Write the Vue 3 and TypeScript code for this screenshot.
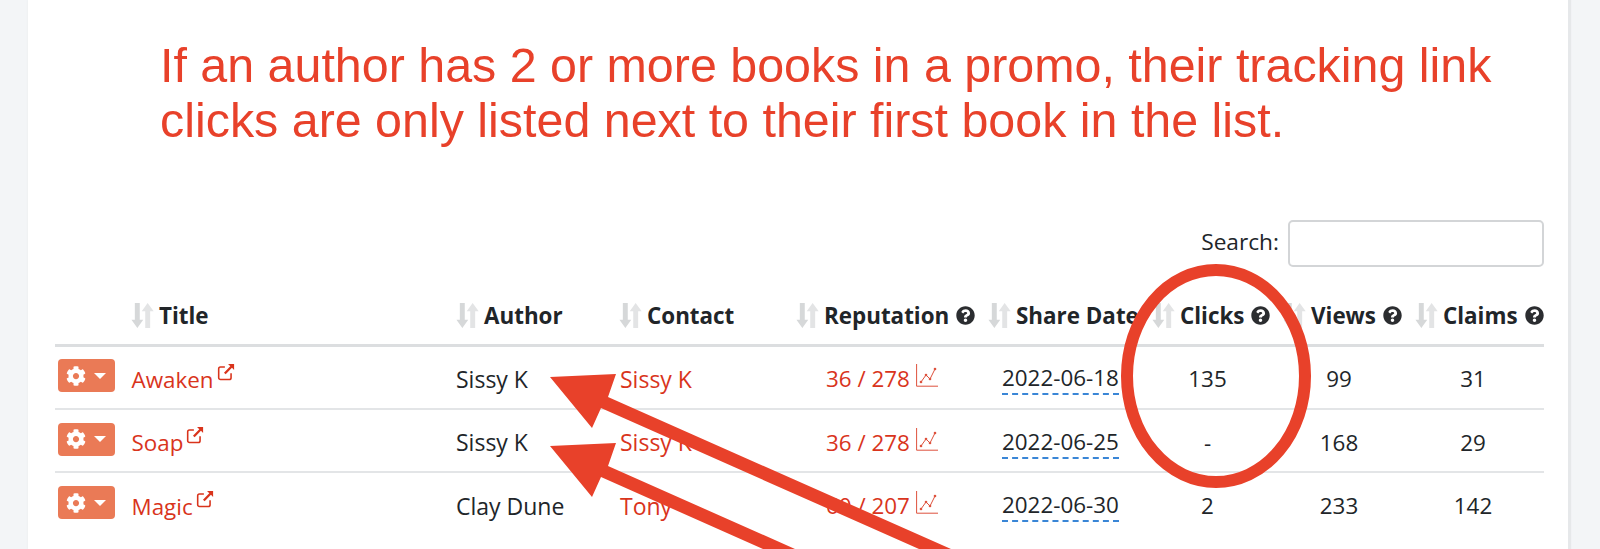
<script setup lang="ts">
interface Row { title: string; author: string; contact: string; rep: string; date: string; clicks: string; views: string; claims: string }
const cols = [
  { key: 'act', label: '', help: false },
  { key: 'title', label: 'Title', help: false },
  { key: 'author', label: 'Author', help: false },
  { key: 'contact', label: 'Contact', help: false },
  { key: 'rep', label: 'Reputation', help: true },
  { key: 'date', label: 'Share Date', help: false },
  { key: 'clicks', label: 'Clicks', help: true },
  { key: 'views', label: 'Views', help: true },
  { key: 'claims', label: 'Claims', help: true }
]
const rows: Row[] = [
  { title: 'Awaken', author: 'Sissy K', contact: 'Sissy K', rep: '36 / 278', date: '2022-06-18', clicks: '135', views: '99', claims: '31' },
  { title: 'Soap', author: 'Sissy K', contact: 'Sissy K', rep: '36 / 278', date: '2022-06-25', clicks: '-', views: '168', claims: '29' },
  { title: 'Magic', author: 'Clay Dune', contact: 'Tony', rep: '60 / 207', date: '2022-06-30', clicks: '2', views: '233', claims: '142' }
]
const help = 'M504 256c0 136.997-111.043 248-248 248S8 392.997 8 256C8 119.083 119.043 8 256 8s248 111.083 248 248zM262.655 90c-54.497 0-89.255 22.957-116.549 63.758-3.536 5.286-2.353 12.415 2.715 16.258l34.699 26.31c5.205 3.947 12.621 3.008 16.665-2.122 17.864-22.658 30.113-35.797 57.303-35.797 20.429 0 45.698 13.148 45.698 32.958 0 14.976-12.363 22.667-32.534 33.976C247.128 238.528 216 254.941 216 296v4c0 6.627 5.373 12 12 12h56c6.627 0 12-5.373 12-12v-1.333c0-28.462 83.186-29.647 83.186-106.667 0-58.002-60.165-102-116.531-102zM256 338c-25.365 0-46 20.635-46 46 0 25.364 20.635 46 46 46s46-20.636 46-46c0-25.365-20.635-46-46-46z'
const cog = 'M487.4 315.7l-42.6-24.6c4.3-23.2 4.3-47 0-70.2l42.6-24.6c4.9-2.8 7.1-8.6 5.5-14-11.1-35.6-30-67.8-54.7-94.6-3.8-4.1-10-5.1-14.8-2.3L380.8 110c-17.9-15.4-38.5-27.3-60.8-35.1V25.8c0-5.6-3.9-10.5-9.4-11.7-36.7-8.2-74.3-7.8-109.2 0-5.5 1.2-9.4 6.1-9.4 11.7V75c-22.2 7.9-42.8 19.8-60.8 35.1L88.7 85.5c-4.9-2.8-11-1.9-14.8 2.3-24.7 26.7-43.6 58.9-54.7 94.6-1.7 5.4.6 11.2 5.5 14L67.3 221c-4.3 23.2-4.3 47 0 70.2l-42.6 24.6c-4.9 2.8-7.1 8.6-5.5 14 11.1 35.6 30 67.8 54.7 94.6 3.8 4.1 10 5.1 14.8 2.3l42.6-24.6c17.9 15.4 38.5 27.3 60.8 35.1v49.2c0 5.6 3.9 10.5 9.4 11.7 36.7 8.2 74.3 7.8 109.2 0 5.5-1.2 9.4-6.1 9.4-11.7v-49.2c22.2-7.9 42.8-19.8 60.8-35.1l42.6 24.6c4.9 2.8 11 1.9 14.8-2.3 24.7-26.7 43.6-58.9 54.7-94.6 1.5-5.5-.7-11.3-5.6-14.1zM256 336c-44.1 0-80-35.9-80-80s35.9-80 80-80 80 35.9 80 80-35.9 80-80 80z'
</script>

<template>
  <main class="page">
    <section class="card">
      <p class="note">If an author has 2 or more books in a promo, their tracking link<br />clicks are only listed next to their first book in the list.</p>
      <div class="search">
        <label for="q">Search:</label>
        <input id="q" type="text" />
      </div>
      <table class="grid">
        <colgroup>
          <col v-for="c in cols" :key="c.key" :class="'w-' + c.key" />
        </colgroup>
        <thead>
          <tr>
            <th v-for="c in cols" :key="c.key">
              <span v-if="c.label" class="th">
                <svg class="sort" viewBox="0 0 21 23" preserveAspectRatio="none" aria-hidden="true">
                  <path d="M3.500 0h4.500v15.500h3.200L5.800 23 .4 15.500h3.100z" fill="#d6d8d9" />
                  <path d="M13 23h4.500V7.500h3.200L15.200 0 9.800 7.500H13z" fill="#e3e4e5" />
                </svg>
                <span class="label">{{ c.label }}</span>
                <svg v-if="c.help" class="help" viewBox="0 0 512 512" aria-hidden="true"><path :d="help" fill="#2b2d30" /></svg>
              </span>
            </th>
          </tr>
        </thead>
        <tbody>
          <tr v-for="r in rows" :key="r.date">
            <td class="actcell">
              <button class="gear" type="button">
                <svg class="cog" viewBox="0 0 512 512" aria-hidden="true"><path :d="cog" fill="#fff" /></svg>
                <span class="caret"></span>
              </button>
            </td>
            <td class="titlecell">
              <a class="link">{{ r.title }}<svg class="ext" viewBox="0 0 16 16" aria-hidden="true"><path d="M12.500 9v4a1.600 1.600 0 0 1-1.600 1.600H3.100A1.600 1.600 0 0 1 1.500 13V5.200a1.600 1.600 0 0 1 1.600-1.600H7" fill="none" stroke="currentColor" stroke-width="1.400" /><path d="M9.800 .8h5.400v5.400l-1.900-1.900-5.600 5.800-1.500-1.500 5.600-5.800z" fill="currentColor" /></svg></a>
            </td>
            <td class="wide authorcell">{{ r.author }}</td>
            <td class="wide"><a class="link">{{ r.contact }}</a></td>
            <td class="rep">
              <a class="link">{{ r.rep }}<svg class="chart" viewBox="0 0 22 23" aria-hidden="true"><path d="M.6 0v22.200H22" fill="none" stroke="currentColor" stroke-width="1" /><path d="M5 18l5-7 4 4 5-10" fill="none" stroke="currentColor" stroke-width="1" /><circle cx="5" cy="18" r="1.300" fill="currentColor" /><circle cx="10" cy="11" r="1.300" fill="currentColor" /><circle cx="14" cy="15" r="1.300" fill="currentColor" /><circle cx="19" cy="5" r="1.300" fill="currentColor" /></svg></a>
            </td>
            <td class="datecell"><span class="date">{{ r.date }}</span></td>
            <td class="num n-clicks">{{ r.clicks }}</td>
            <td class="num n-views">{{ r.views }}</td>
            <td class="num n-claims">{{ r.claims }}</td>
          </tr>
        </tbody>
      </table>
      <svg class="marks" viewBox="0 0 1600 549" aria-hidden="true">
        <path d="M550 377 616 374 608 397 951 549H919L601 408 592 428z" fill="#e8412a" />
        <path d="M550 446 616 443 608 466 795 549H763L601 477 592 497z" fill="#e8412a" />
        <ellipse cx="1216" cy="376" rx="89" ry="106" fill="none" stroke="#e8412a" stroke-width="12" />
      </svg>
    </section>
  </main>
</template>

<style scoped>
.page {
  height: 549px;
  overflow: hidden;
  background: #f3f5f7;
  padding: 0 32px 0 28px;
  box-sizing: border-box;
  font-family: "Open Sans", sans-serif;
  font-size: 22.400px;
  color: #212529;
}
.card {
  height: 549px;
  background: #fff;
  box-shadow: 3px 0 1px #e6e8ea, 0 0 2px #e9ebed;
  padding: 38px 24px 0 27px;
  box-sizing: border-box;
}
.note {
  margin: 0 0 0 105px;
  font-family: "Liberation Sans", Arial, sans-serif;
  font-size: 48.400px;
  line-height: 55px;
  color: #e8412a;
  white-space: nowrap;
}
.search {
  display: flex;
  justify-content: flex-end;
  align-items: center;
  gap: 9px;
  margin-top: 72px;
  height: 47px;
}
.search label {
  font-size: 22.700px;
  margin-bottom: 4px;
}
.search input {
  width: 256px;
  height: 47px;
  box-sizing: border-box;
  border: 2px solid #d3d5d7;
  border-radius: 5px;
  background: #fff;
}
.grid {
  width: 1489px;
  table-layout: fixed;
  border-collapse: collapse;
}
.w-act { width: 74px; }
.w-title { width: 325px; }
.w-author { width: 163px; }
.w-contact { width: 177px; }
.w-rep { width: 192px; }
.w-date { width: 164px; }
.w-clicks { width: 131px; }
.w-views { width: 132px; }
.w-claims { width: 131px; }
th {
  height: 78px;
  padding: 25px 0 0 4px;
  box-sizing: border-box;
  border-bottom: 3px solid #dcdee0;
  text-align: left;
  white-space: nowrap;
  vertical-align: middle;
}
.th {
  display: inline-flex;
  align-items: center;
  font-weight: 700;
  font-size: 22.400px;
}
.sort { width: 23px; height: 25px; margin: 0 5px 0 -2px; flex: none; }
.help { width: 19px; height: 19px; margin-left: 7px; flex: none; }
td {
  height: 63px;
  padding: 3px 0 0 3px;
  box-sizing: border-box;
  border-bottom: 2px solid #e3e5e7;
  white-space: nowrap;
  vertical-align: middle;
}
tbody tr:first-child td { height: 64px; }
tbody tr:last-child td { border-bottom: 0; }
.actcell { padding: 0 0 3px 3px; }
.titlecell { padding-left: 2.500px; }
.authorcell { padding-left: 2px; }
.wide { font-size: 23px; }
.link { color: #d9341c; }
.ext { width: 18px; height: 18px; vertical-align: 7px; margin-left: 3px; }
.chart { width: 22px; height: 23px; vertical-align: 0; margin-left: 6px; opacity: .85; }
.gear {
  display: flex;
  align-items: center;
  gap: 8px;
  width: 57px;
  height: 33px;
  border: 0;
  border-radius: 4px;
  background: #ea7a56;
  padding: 0 0 0 8px;
}
.cog { width: 20px; height: 20px; }
.caret {
  width: 0;
  height: 0;
  border: 6px solid transparent;
  border-top-color: #fff;
  border-bottom: 0;
}
.rep { padding-left: 32px; }
.datecell { padding-left: 16px; }
.date {
  display: inline-block;
  line-height: 30px;
  border-bottom: 2px dashed #3a86d6;
}
.num { text-align: center; padding-left: 0; }
.n-clicks { padding-right: 16px; }
.n-views { padding-right: 16px; }
.n-claims { padding-right: 11px; }
.marks {
  position: absolute;
  left: 0;
  top: 0;
  width: 1600px;
  height: 549px;
  pointer-events: none;
}
</style>
<style>
html, body { overflow: hidden; }
</style>
